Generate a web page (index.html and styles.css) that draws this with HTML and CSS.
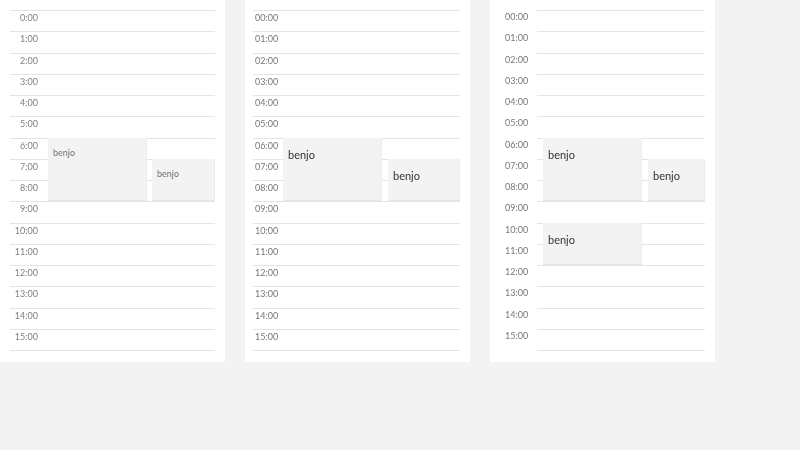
FILE: index.html
```html
<!DOCTYPE html>
<html>
<head>
<meta charset="utf-8">
<link rel="stylesheet" href="styles.css">
</head>
<body>
<div class="page">
  <section class="cal cal-a">
    <div class="rows">
      <div class="row"><span class="time">0:00</span><span class="cell"></span></div>
      <div class="row"><span class="time">1:00</span><span class="cell"></span></div>
      <div class="row"><span class="time">2:00</span><span class="cell"></span></div>
      <div class="row"><span class="time">3:00</span><span class="cell"></span></div>
      <div class="row"><span class="time">4:00</span><span class="cell"></span></div>
      <div class="row"><span class="time">5:00</span><span class="cell"></span></div>
      <div class="row"><span class="time">6:00</span><span class="cell"></span></div>
      <div class="row"><span class="time">7:00</span><span class="cell"></span></div>
      <div class="row"><span class="time">8:00</span><span class="cell"></span></div>
      <div class="row"><span class="time">9:00</span><span class="cell"></span></div>
      <div class="row"><span class="time">10:00</span><span class="cell"></span></div>
      <div class="row"><span class="time">11:00</span><span class="cell"></span></div>
      <div class="row"><span class="time">12:00</span><span class="cell"></span></div>
      <div class="row"><span class="time">13:00</span><span class="cell"></span></div>
      <div class="row"><span class="time">14:00</span><span class="cell"></span></div>
      <div class="row"><span class="time">15:00</span><span class="cell"></span></div>
    </div>
    <div class="events">
      <div class="event" style="top:127.5px;height:63.75px;left:0;width:99px">benjo</div>
      <div class="event" style="top:148.75px;height:42.5px;left:104px;width:63px">benjo</div>
    </div>
  </section>

  <section class="cal cal-b">
    <div class="rows">
      <div class="row"><span class="time">00:00</span><span class="cell"></span></div>
      <div class="row"><span class="time">01:00</span><span class="cell"></span></div>
      <div class="row"><span class="time">02:00</span><span class="cell"></span></div>
      <div class="row"><span class="time">03:00</span><span class="cell"></span></div>
      <div class="row"><span class="time">04:00</span><span class="cell"></span></div>
      <div class="row"><span class="time">05:00</span><span class="cell"></span></div>
      <div class="row"><span class="time">06:00</span><span class="cell"></span></div>
      <div class="row"><span class="time">07:00</span><span class="cell"></span></div>
      <div class="row"><span class="time">08:00</span><span class="cell"></span></div>
      <div class="row"><span class="time">09:00</span><span class="cell"></span></div>
      <div class="row"><span class="time">10:00</span><span class="cell"></span></div>
      <div class="row"><span class="time">11:00</span><span class="cell"></span></div>
      <div class="row"><span class="time">12:00</span><span class="cell"></span></div>
      <div class="row"><span class="time">13:00</span><span class="cell"></span></div>
      <div class="row"><span class="time">14:00</span><span class="cell"></span></div>
      <div class="row"><span class="time">15:00</span><span class="cell"></span></div>
    </div>
    <div class="events">
      <div class="event" style="top:127.5px;height:63.75px;left:0;width:99px">benjo</div>
      <div class="event" style="top:148.75px;height:42.5px;left:105px;width:72px">benjo</div>
    </div>
  </section>

  <section class="cal cal-c">
    <div class="rows">
      <div class="row"><span class="time">00:00</span><span class="cell"></span></div>
      <div class="row"><span class="time">01:00</span><span class="cell"></span></div>
      <div class="row"><span class="time">02:00</span><span class="cell"></span></div>
      <div class="row"><span class="time">03:00</span><span class="cell"></span></div>
      <div class="row"><span class="time">04:00</span><span class="cell"></span></div>
      <div class="row"><span class="time">05:00</span><span class="cell"></span></div>
      <div class="row"><span class="time">06:00</span><span class="cell"></span></div>
      <div class="row"><span class="time">07:00</span><span class="cell"></span></div>
      <div class="row"><span class="time">08:00</span><span class="cell"></span></div>
      <div class="row"><span class="time">09:00</span><span class="cell"></span></div>
      <div class="row"><span class="time">10:00</span><span class="cell"></span></div>
      <div class="row"><span class="time">11:00</span><span class="cell"></span></div>
      <div class="row"><span class="time">12:00</span><span class="cell"></span></div>
      <div class="row"><span class="time">13:00</span><span class="cell"></span></div>
      <div class="row"><span class="time">14:00</span><span class="cell"></span></div>
      <div class="row"><span class="time">15:00</span><span class="cell"></span></div>
    </div>
    <div class="events">
      <div class="event" style="top:127.5px;height:63.75px;left:0;width:99px">benjo</div>
      <div class="event" style="top:148.75px;height:42.5px;left:105px;width:57px">benjo</div>
      <div class="event" style="top:212.5px;height:42.5px;left:0;width:99px">benjo</div>
    </div>
  </section>
</div>
</body>
</html>
```
FILE: styles.css
```css
html, body {
  margin: 0;
  padding: 0;
  background: #f3f3f3;
  font-family: Lato, "Open Sans", sans-serif;
}

.page {
  display: flex;
  gap: 20px;
  align-items: flex-start;
  will-change: transform;
}

.cal {
  position: relative;
  width: 225px;
  box-sizing: border-box;
  background: #fff;
  padding: 10px 10px 11px 10px;
}

.rows {
  display: flex;
  flex-direction: column;
}

.row {
  display: flex;
  height: 21.25px;
  box-sizing: border-box;
  border-top: 1px solid #e4e4e4;
}

.row:last-child {
  border-bottom: 1px solid #e4e4e4;
  height: 22.25px;
}

.time {
  font-size: 9px;
  line-height: 12px;
  padding-top: 1px;
  color: #777;
  flex: none;
}

.cell {
  flex: 1;
}

.events {
  position: absolute;
  top: 10px;
  right: 10px;
  height: 340px;
}

.event {
  position: absolute;
  box-sizing: border-box;
  background: #f3f3f3;
  border-right: 1px solid #ececec;
  border-bottom: 1px solid #e6e6e6;
  padding: 9px 5px 0;
}

/* panel A */
.cal-a .time {
  width: 28px;
  text-align: right;
  color: #808080;
}
.cal-a .events {
  left: 48px;
}
.cal-a .event {
  font-size: 9px;
  line-height: 11px;
  color: #6f6f6f;
}

/* panel B */
.cal-b {
  padding-left: 8px;
}
.cal-b .time {
  width: 28px;
  padding-left: 2px;
  box-sizing: border-box;
}
.cal-b .events {
  left: 38px;
}
.cal-b .event,
.cal-c .event {
  font-size: 11px;
  line-height: 13px;
  color: #333;
  padding-top: 10px;
}

/* panel C */
.cal-c {
  padding-left: 15px;
}
.cal-c .row {
  border-top: none;
}
.cal-c .row:last-child {
  border-bottom: none;
}
.cal-c .time {
  width: 32px;
}
.cal-c .cell {
  border-top: 1px solid #e4e4e4;
}
.cal-c .row:last-child .cell {
  border-bottom: 1px solid #e4e4e4;
}
.cal-c .events {
  left: 53px;
}
```
